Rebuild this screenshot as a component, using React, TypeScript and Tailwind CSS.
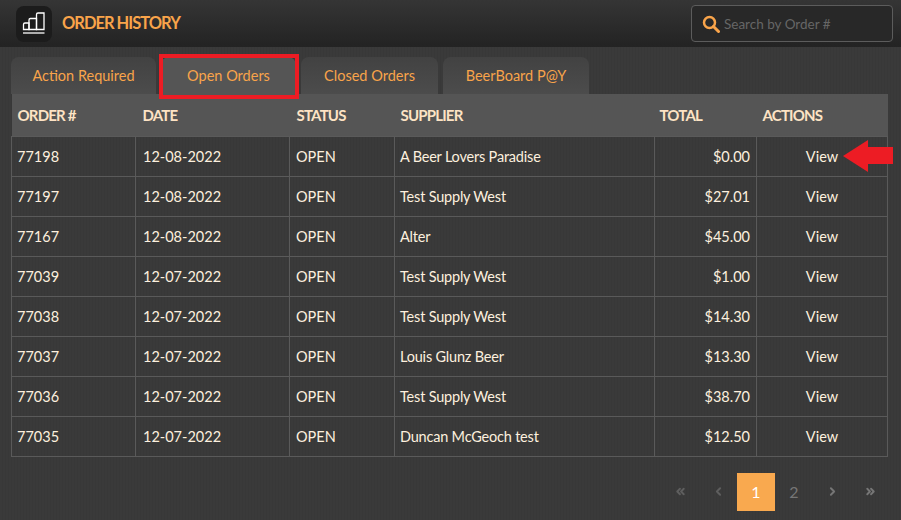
import { ChevronLeft, ChevronRight, ChevronsLeft, ChevronsRight } from "lucide-react";

const orders = [
	{ id: "77198", date: "12-08-2022", supplier: "A Beer Lovers Paradise", total: "$0.00" },
	{ id: "77197", date: "12-08-2022", supplier: "Test Supply West", total: "$27.01" },
	{ id: "77167", date: "12-08-2022", supplier: "Alter", total: "$45.00" },
	{ id: "77039", date: "12-07-2022", supplier: "Test Supply West", total: "$1.00" },
	{ id: "77038", date: "12-07-2022", supplier: "Test Supply West", total: "$14.30" },
	{ id: "77037", date: "12-07-2022", supplier: "Louis Glunz Beer", total: "$13.30" },
	{ id: "77036", date: "12-07-2022", supplier: "Test Supply West", total: "$38.70" },
	{ id: "77035", date: "12-07-2022", supplier: "Duncan McGeoch test", total: "$12.50" },
];

const tabs = ["Action Required", "Open Orders", "Closed Orders", "BeerBoard P@Y"];

const cell = "border border-[#5a5a5a] px-[5px] pt-[2px] font-normal";
const head = "px-[7px] text-left font-bold text-[15px] tracking-[-0.8px] text-[#fde3c4]";
const page = "flex h-[38px] w-[38px] items-center justify-center";

const App = () => {
	return (
		<div className="relative h-[520px] w-[901px] overflow-hidden bg-[repeating-linear-gradient(90deg,#3a3a3a_0px,#3a3a3a_2px,#383838_2px,#383838_3px)] font-['Lato','Liberation_Sans',sans-serif]">
			<header className="flex h-[47px] items-center justify-between bg-gradient-to-b from-[#353535] to-[#232323] pl-4 pr-2">
				<div className="flex items-center gap-[10px]">
					<div className="flex h-9 w-9 items-center justify-center rounded-lg bg-[#1c1c1c]">
						<svg width="36" height="36" viewBox="0 0 36 36" fill="none" stroke="#fff" strokeWidth="1.3">
							<path d="M7.5 23.5v-5a1.5 1.5 0 0 1 1.5-1.5h4v6.500z" />
							<path d="M13 23.500V14a1.500 1.500 0 0 1 1.500-1.500H20.500v11z" />
							<path d="M20.500 23.500V8.500A1.500 1.500 0 0 1 22 7h6v16.500z" />
							<path d="M7 27h21.500" />
						</svg>
					</div>
					<h1 className="text-[16.5px] font-bold tracking-[-1px] text-[#f9a44a]">ORDER HISTORY</h1>
				</div>
				<div className="flex h-[37px] w-[202px] items-center gap-[4px] rounded border border-[#5c5c5c] bg-[#282828] pl-[10px]">
					<svg width="18" height="18" viewBox="0 0 18 18" fill="none" stroke="#f9a44a">
						<circle cx="7.500" cy="7.500" r="5.500" strokeWidth="2.500" />
						<path d="M11.500 11.500l5 5" strokeWidth="3" strokeLinecap="round" />
					</svg>
					<span className="pt-px text-[13.5px] text-[#666666]">Search by Order #</span>
				</div>
			</header>

			<main className="px-[11px]">
				<nav className="flex gap-[5px] pt-[10px]">
					{tabs.map((tab, i) => (
						<div
							key={tab}
							className={`flex h-[37px] items-center justify-center rounded-t-lg text-[14.5px] text-[#f9a44a] ${
								i === 1 ? "bg-[#555555]" : "bg-gradient-to-b from-[#424242] to-[#4c4c4c]"
							} ${i === 0 ? "w-[145px]" : i === 1 ? "w-[135px]" : i === 2 ? "w-[137px]" : "w-[146px]"}`}
						>
							{tab}
						</div>
					))}
				</nav>

				<table className="w-[876px] table-fixed border-collapse text-[14.5px] text-[#fdf0df]">
					<colgroup>
						<col className="w-[124px]" />
						<col className="w-[154px]" />
						<col className="w-[105px]" />
						<col className="w-[260px]" />
						<col className="w-[102px]" />
						<col className="w-[131px]" />
					</colgroup>
					<thead>
						<tr className="h-[42px] bg-[#555555]">
							<th className={`${head} pl-[6px]`}>ORDER #</th>
							<th className={head}>DATE</th>
							<th className={head}>STATUS</th>
							<th className={`${head} pl-[6px]`}>SUPPLIER</th>
							<th className={`${head} pl-[5px]`}>TOTAL</th>
							<th className={`${head} pl-[6px]`}>ACTIONS</th>
						</tr>
					</thead>
					<tbody>
						{orders.map((order) => (
							<tr key={order.id} className="h-10">
								<td className={cell}>{order.id}</td>
								<td className={`${cell} pl-[7px]`}>{order.date}</td>
								<td className={`${cell} pl-[6px]`}>OPEN</td>
								<td className={`${cell} tracking-[-0.2px]`}>{order.supplier}</td>
								<td className={`${cell} text-right pr-[6px]`}>{order.total}</td>
								<td className={`${cell} text-center`}>View</td>
							</tr>
						))}
					</tbody>
				</table>

				<div className="mt-4 flex justify-end pr-px text-[#767676]">
					<span className={`${page} text-[#5e5e5e]`}><ChevronsLeft size={13} strokeWidth={3.5} /></span>
					<span className={`${page} text-[#5e5e5e]`}><ChevronLeft size={13} strokeWidth={3.5} /></span>
					<span className={`${page} bg-[#f9a94f] text-[16px] text-white`}>1</span>
					<span className={`${page} text-[16px]`}>2</span>
					<span className={page}><ChevronRight size={13} strokeWidth={3.5} /></span>
					<span className={page}><ChevronsRight size={13} strokeWidth={3.5} /></span>
				</div>
			</main>

			{/* annotations drawn over the screenshot */}
			<div className="absolute left-[159px] top-[54px] h-[45px] w-[140px] border-[4px] border-[#ed1c24]" />
			<svg className="absolute left-[843px] top-[140px]" width="50" height="32" viewBox="0 0 50 32">
				<path d="M0 16 L25 0 V7 H50 V24 H25 V32 Z" fill="#ed1c24" />
			</svg>
		</div>
	);
};

export default App;
